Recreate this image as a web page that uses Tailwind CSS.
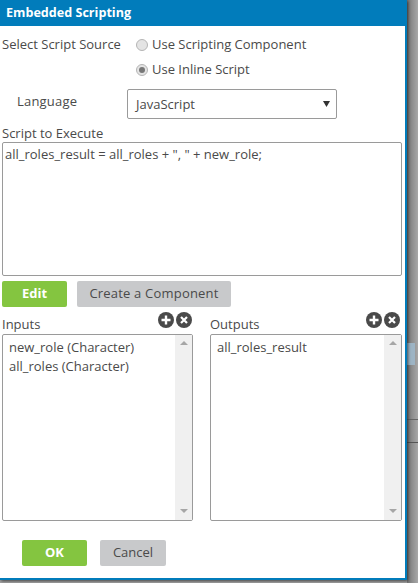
<!DOCTYPE html>
<html lang="en">
<head>
    <meta charset="UTF-8">
    <title>Embedded Scripting</title>
    <script src="https://cdn.jsdelivr.net/npm/@tailwindcss/browser@4"></script>
</head>
<body class="bg-[#a3a3a3] h-[583px] w-[418px] overflow-hidden relative font-['Open_Sans',sans-serif] text-[13px] text-[#4a4a4a]">
    <!-- Page peeking out behind the dialog -->
    <div class="absolute left-[407px] top-0 w-[11px] h-[583px] bg-gradient-to-r from-[#777777] to-[#a8a8a8]"></div>
    <div class="absolute left-[407px] top-[343px] w-[8px] h-[22px] bg-[#9db4c4]"></div>
    <div class="absolute left-[407px] top-[419px] w-[11px] h-px bg-[#666666]"></div>
    <div class="absolute left-[407px] top-[442px] w-[11px] h-px bg-[#555555]"></div>

    <!-- Dialog -->
    <div class="relative w-[407px] h-[580px] bg-[#017cbb] pr-[2px] pb-[2px] shadow-[1px_1px_3px_rgba(0,0,0,0.6)] flex flex-col">
        <div class="h-[26px] shrink-0 pl-[6px] flex items-center font-bold text-white text-[12.6px]">Embedded Scripting</div>
        <div class="flex-1 bg-white pl-[2px] pr-[3px]">
            <!-- Script source -->
            <div class="flex h-[37px] pt-[9px]">
                <span class="w-[134px] leading-[18px]">Select Script Source</span>
                <label class="flex items-center h-[18px] gap-[4px] mt-px">
                    <span class="w-[12px] h-[12px] rounded-full bg-[#e4e4e4] border border-[#b5b5b5]"></span>
                    <span>Use Scripting Component</span>
                </label>
            </div>
            <div class="flex h-[22px] pl-[134px]">
                <label class="flex items-center h-[18px] gap-[4px] mt-[-2px]">
                    <span class="w-[12px] h-[12px] rounded-full bg-[#e4e4e4] border border-[#b5b5b5] flex items-center justify-center">
                        <span class="w-[6px] h-[6px] rounded-full bg-[#777777]"></span>
                    </span>
                    <span>Use Inline Script</span>
                </label>
            </div>
            <!-- Language -->
            <div class="flex items-center h-[30px] mt-[4px]">
                <span class="w-[125px] pl-[15px] mt-[-4px] font-medium tracking-[0.2px]">Language</span>
                <div class="w-[210px] h-[30px] border border-[#9a9a9a] rounded-[2px] flex items-center justify-between pl-[8px] pr-[6px]">
                    <span class="mt-[2px]">JavaScript</span>
                    <svg width="7" height="6" viewBox="0 0 7 6"><path d="M0 0h7L3.5 6z" fill="#333333"/></svg>
                </div>
            </div>
            <!-- Script -->
            <div class="h-[23px] leading-[18px] pt-[6px] mt-[-1px]">Script to Execute</div>
            <div class="w-[400px] h-[134px] border border-[#9a9a9a] rounded-[2px] px-[2px] py-[2px] leading-[18px] mt-[1px]">all_roles_result = all_roles + ", " + new_role;</div>
            <!-- Script buttons -->
            <div class="flex gap-[10px] mt-[5px]">
                <div class="w-[65px] h-[26px] bg-[#84c540] rounded-[2px] text-white font-bold flex items-center justify-center">Edit</div>
                <div class="w-[154px] h-[26px] bg-[#c8c9cb] rounded-[2px] font-medium tracking-[0.2px] flex items-center justify-center">Create a Component</div>
            </div>
            <!-- Inputs and outputs -->
            <div class="flex gap-[17px] mt-[9px]">
                <div class="w-[191px]">
                    <div class="flex justify-between items-start h-[18px]">
                        <span class="leading-[18px] mt-[-1px]">Inputs</span>
                        <div class="flex gap-[2px] mr-[1px] mt-[-4px]">
                            <svg width="16" height="16" viewBox="0 0 16 16"><circle cx="8" cy="8" r="8" fill="#4a4a4a"/><path d="M8 3.5v9M3.5 8h9" stroke="#fff" stroke-width="2.4"/></svg>
                            <svg width="16" height="16" viewBox="0 0 16 16"><circle cx="8" cy="8" r="8" fill="#4a4a4a"/><path d="M5 5l6 6M11 5l-6 6" stroke="#fff" stroke-width="2.2"/></svg>
                        </div>
                    </div>
                    <div class="h-[187px] border border-[#9a9a9a] rounded-[2px] flex">
                        <div class="flex-1 pl-[6px] pt-[3px] leading-[19px]">
                            <div>new_role (Character)</div>
                            <div>all_roles (Character)</div>
                        </div>
                        <div class="w-[17px] bg-[#f0f0f0] flex flex-col justify-between items-center pt-[6px] pb-[7px]">
                            <svg width="8" height="4" viewBox="0 0 8 4"><path d="M0 4h8L4 0z" fill="#a6a6a6"/></svg>
                            <svg width="8" height="4" viewBox="0 0 8 4"><path d="M0 0h8L4 4z" fill="#a6a6a6"/></svg>
                        </div>
                    </div>
                </div>
                <div class="w-[192px]">
                    <div class="flex justify-between items-start h-[18px]">
                        <span class="leading-[18px] mt-[-1px]">Outputs</span>
                        <div class="flex gap-[2px] mr-[2px] mt-[-4px]">
                            <svg width="16" height="16" viewBox="0 0 16 16"><circle cx="8" cy="8" r="8" fill="#4a4a4a"/><path d="M8 3.5v9M3.5 8h9" stroke="#fff" stroke-width="2.4"/></svg>
                            <svg width="16" height="16" viewBox="0 0 16 16"><circle cx="8" cy="8" r="8" fill="#4a4a4a"/><path d="M5 5l6 6M11 5l-6 6" stroke="#fff" stroke-width="2.2"/></svg>
                        </div>
                    </div>
                    <div class="h-[187px] border border-[#9a9a9a] rounded-[2px] flex">
                        <div class="flex-1 pl-[6px] pt-[3px] leading-[19px]">all_roles_result</div>
                        <div class="w-[17px] bg-[#f0f0f0] flex flex-col justify-between items-center pt-[6px] pb-[7px]">
                            <svg width="8" height="4" viewBox="0 0 8 4"><path d="M0 4h8L4 0z" fill="#a6a6a6"/></svg>
                            <svg width="8" height="4" viewBox="0 0 8 4"><path d="M0 0h8L4 4z" fill="#a6a6a6"/></svg>
                        </div>
                    </div>
                </div>
            </div>
            <!-- Footer -->
            <div class="flex gap-[13px] mt-[19px] ml-[20px]">
                <div class="w-[65px] h-[26px] bg-[#84c540] rounded-[2px] text-white font-bold flex items-center justify-center">OK</div>
                <div class="w-[66px] h-[26px] bg-[#c8c9cb] rounded-[2px] font-medium flex items-center justify-center">Cancel</div>
            </div>
        </div>
    </div>
</body>
</html>
